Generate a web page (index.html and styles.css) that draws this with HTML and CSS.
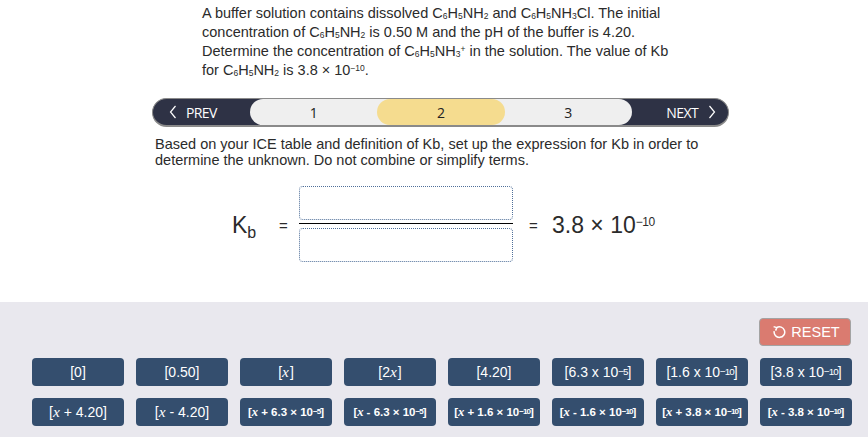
FILE: index.html
```html
<!DOCTYPE html>
<html>
<head>
<meta charset="utf-8">
<link rel="stylesheet" href="styles.css">
</head>
<body>
<div class="main">
  <p class="question">A buffer solution contains dissolved C<sub>6</sub>H<sub>5</sub>NH<sub>2</sub> and C<sub>6</sub>H<sub>5</sub>NH<sub>3</sub>Cl. The initial<br>concentration of C<sub>6</sub>H<sub>5</sub>NH<sub>2</sub> is 0.50 M and the pH of the buffer is 4.20.<br>Determine the concentration of C<sub>6</sub>H<sub>5</sub>NH<sub>3</sub><sup>+</sup> in the solution. The value of Kb<br>for C<sub>6</sub>H<sub>5</sub>NH<sub>2</sub> is 3.8 × 10<sup>−10</sup>.</p>

  <div class="nav">
    <div class="nav-side prev">
      <svg class="chev" width="8" height="14" viewBox="0 0 8 14"><path d="M6.5 1 L1.5 7 L6.5 13" fill="none" stroke="#fff" stroke-width="1.2"/></svg>
      <span>PREV</span>
    </div>
    <div class="steps">
      <div class="step">1</div>
      <div class="step active">2</div>
      <div class="step">3</div>
    </div>
    <div class="nav-side next">
      <span>NEXT</span>
      <svg class="chev" width="8" height="14" viewBox="0 0 8 14"><path d="M1.5 1 L6.5 7 L1.5 13" fill="none" stroke="#fff" stroke-width="1.2"/></svg>
    </div>
  </div>

  <p class="prompt">Based on your ICE table and definition of Kb, set up the expression for Kb in order to determine the unknown. Do not combine or simplify terms.</p>

  <div class="equation">
    <div class="kb">K<sub>b</sub></div>
    <div class="eq">=</div>
    <div class="fraction">
      <div class="slot"></div>
      <div class="bar"></div>
      <div class="slot"></div>
    </div>
    <div class="eq eq2">=</div>
    <div class="value">3.8 × 10<sup>−10</sup></div>
  </div>
</div>

<div class="tray">
  <div class="reset-row">
    <button class="reset">
      <svg width="14" height="14" viewBox="0 0 14 14"><path d="M4.6 2.6 A5.3 5.3 0 1 1 2.2 6.2" fill="none" stroke="#fff" stroke-width="1.5"/><path d="M1.6 1.6 L4.8 2.6 L3.6 5.6" fill="none" stroke="#fff" stroke-width="1.5"/></svg>
      <span>RESET</span>
    </button>
  </div>
  <div class="tiles">
    <div class="tile">[0]</div>
    <div class="tile">[0.50]</div>
    <div class="tile">[<i>x</i>]</div>
    <div class="tile">[2<i>x</i>]</div>
    <div class="tile">[4.20]</div>
    <div class="tile">[6.3 x 10<sup>−5</sup>]</div>
    <div class="tile">[1.6 x 10<sup>−10</sup>]</div>
    <div class="tile">[3.8 x 10<sup>−10</sup>]</div>
    <div class="tile">[<i class="sp">x</i> + 4.20]</div>
    <div class="tile">[<i class="sp">x</i> - 4.20]</div>
    <div class="tile small">[<i class="sp">x</i> + 6.3 × 10<sup>−5</sup>]</div>
    <div class="tile small">[<i class="sp">x</i> - 6.3 × 10<sup>−5</sup>]</div>
    <div class="tile small">[<i class="sp">x</i> + 1.6 × 10<sup>−10</sup>]</div>
    <div class="tile small">[<i class="sp">x</i> - 1.6 × 10<sup>−10</sup>]</div>
    <div class="tile small">[<i class="sp">x</i> + 3.8 × 10<sup>−10</sup>]</div>
    <div class="tile small">[<i class="sp">x</i> - 3.8 × 10<sup>−10</sup>]</div>
  </div>
</div>
</body>
</html>
```

FILE: styles.css
```css
* { box-sizing: border-box; }
html, body { margin: 0; padding: 0; }
body {
  width: 868px;
  height: 437px;
  overflow: hidden;
  font-family: "Liberation Sans", Arial, sans-serif;
  color: #2b2b2b;
  background: #fff;
}
.main {
  height: 302px;
  padding-top: 4px;
}
.question {
  margin: 0 0 0 202px;
  font-size: 14.5px;
  line-height: 19px;
  white-space: nowrap;
}
.question sub, .question sup {
  font-size: 8.5px;
  line-height: 1;
}
.question sub { vertical-align: -1px; }
.question sup { vertical-align: 4px; }

.nav {
  margin: 18px 0 0 152px;
  width: 577px;
  height: 29px;
  display: flex;
  background: #2e3245;
  border: 1px solid #8a8a8a;
  border-bottom-width: 2px;
  border-radius: 15px;
  font-family: "Open Sans", "Liberation Sans", sans-serif;
  font-size: 14px;
  color: #fff;
}
.nav-side {
  display: flex;
  align-items: center;
  gap: 9px;
  width: 97px;
}
.prev { padding-left: 16px; }
.next { justify-content: flex-end; padding-right: 12px; width: 96px; gap: 10px; }
.nav-side span { letter-spacing: -0.6px; }
.chev { display: block; }
.steps {
  flex: 1;
  display: flex;
  background: #efefef;
  border-radius: 14px;
  color: #222;
}
.step {
  flex: 1;
  display: flex;
  align-items: center;
  justify-content: center;
  border-radius: 14px;
}
.step.active { background: #f5dc8f; }

.prompt {
  margin: 9px 0 0 155px;
  font-size: 14.5px;
  line-height: 16px;
  width: 565px;
}

.equation {
  margin: 18px 0 0 232px;
  display: flex;
  align-items: center;
}
.kb {
  font-size: 23px;
  width: 47px;
  padding-top: 4px;
}
.kb sub {
  font-size: 16px;
  vertical-align: -5px;
  line-height: 1;
}
.eq {
  font-size: 15px;
  width: 20px;
  padding-top: 2px;
}
.eq2 { width: 23px; padding-left: 16px; box-sizing: content-box; }
.fraction {
  width: 214px;
  display: flex;
  flex-direction: column;
}
.slot {
  height: 34px;
  border: 1px dotted #4f6f99;
  border-radius: 4px;
  background: #fff;
}
.bar {
  height: 1px;
  background: #000;
  margin: 3px 0 4px;
}
.value {
  font-size: 23px;
  padding-top: 2px;
}
.value sup {
  font-size: 12px;
  vertical-align: 7px;
  line-height: 1;
  letter-spacing: -0.5px;
}

.tray {
  height: 135px;
  background: #e9e8ee;
  padding: 16px 0 0 32px;
}
.reset-row {
  width: 820px;
  display: flex;
  justify-content: flex-end;
}
.reset {
  width: 92px;
  height: 28px;
  margin-right: 1px;
  display: flex;
  align-items: center;
  justify-content: center;
  gap: 5px;
  padding: 0 0 0 2px;
  background: #da7b70;
  border: 1px solid #a3a3a3;
  border-radius: 4px;
  color: #fff;
  font-family: "Liberation Sans", Arial, sans-serif;
  font-size: 14.5px;
}
.reset svg { display: block; }
.tiles {
  margin-top: 12px;
  display: grid;
  grid-template-columns: repeat(8, 92px);
  grid-auto-rows: 28px;
  gap: 12px;
}
.tile {
  background: #344e6e;
  border-radius: 4px;
  color: #fff;
  display: flex;
  align-items: center;
  justify-content: center;
  font-size: 14px;
  white-space: nowrap;
}
.tile i {
  font-family: "Liberation Serif", "Times New Roman", serif;
  font-size: 1.1em;
  margin-right: 1px;
}
.tile i.sp { margin-right: 4px; }
.tile sup {
  font-size: 0.7em;
  line-height: 1;
  vertical-align: 5px;
  letter-spacing: -1px;
}
.tile.small {
  font-size: 11.5px;
  font-weight: 700;
}
.tile.small i.sp { margin-right: 3px; }
.tile.small sup { vertical-align: 4px; }
```
